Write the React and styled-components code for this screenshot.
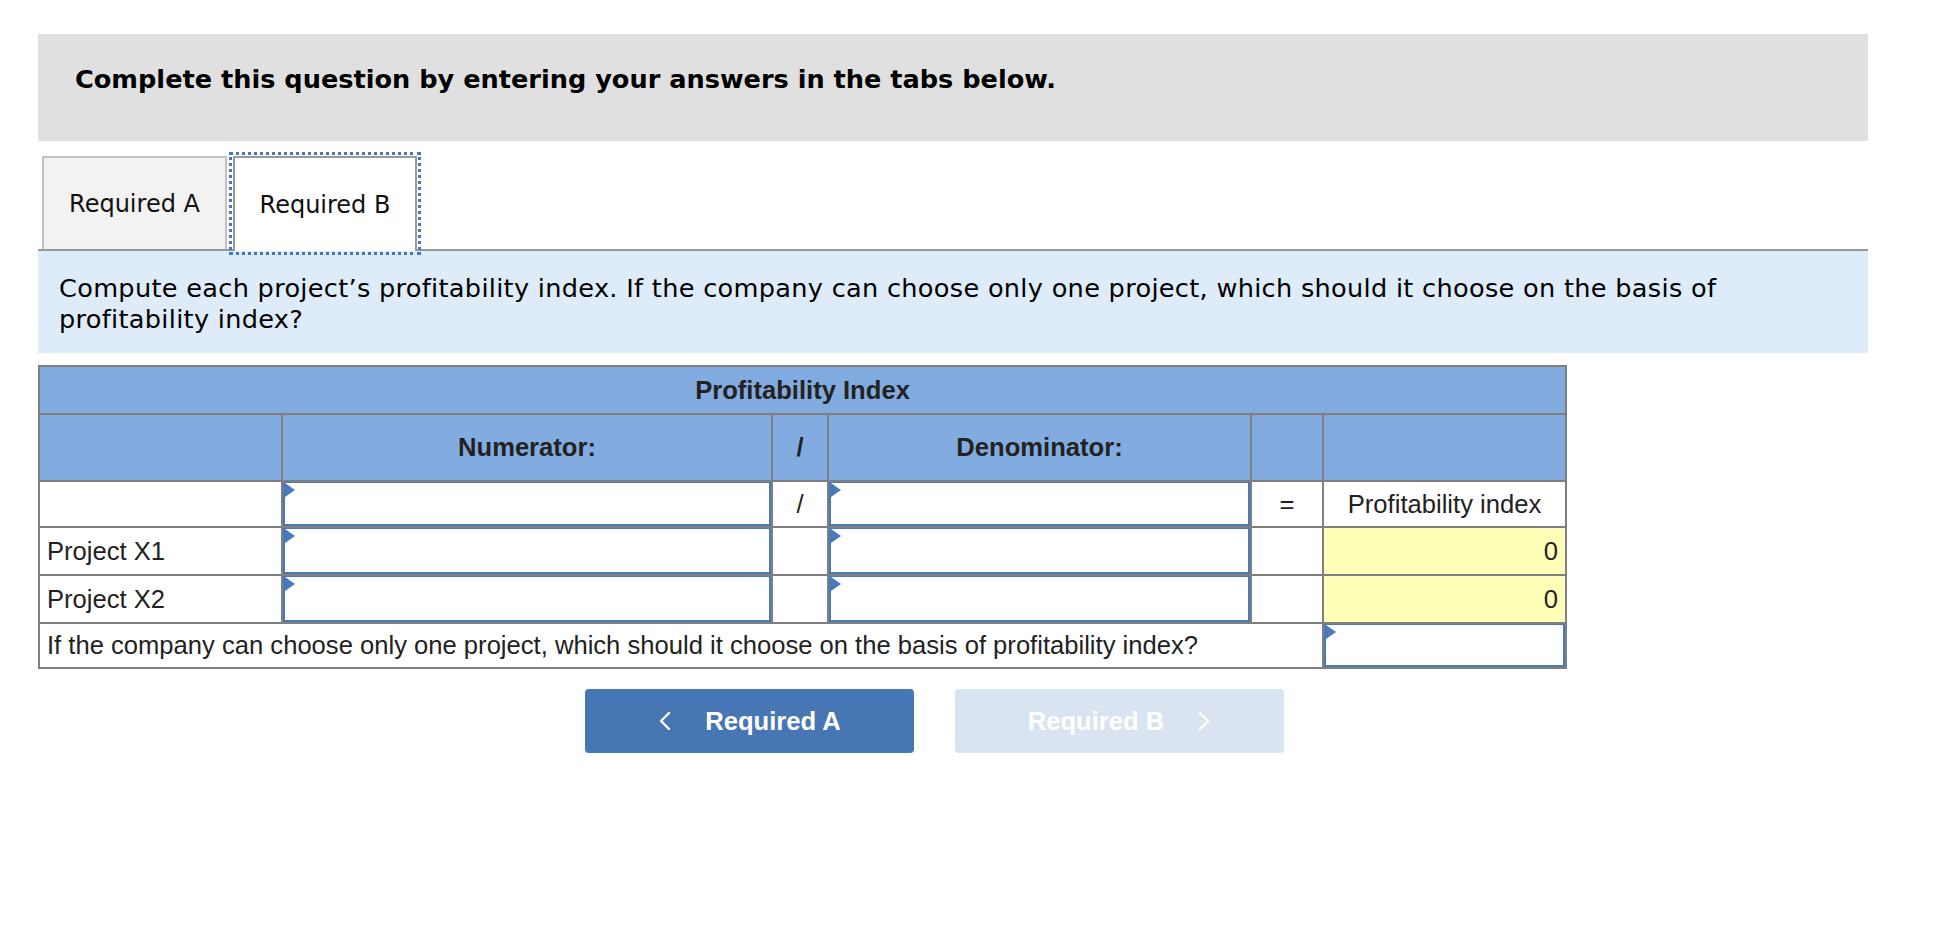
import styled, { createGlobalStyle } from "styled-components";

const GlobalStyle = createGlobalStyle`
  html, body {
    margin: 0;
    padding: 0;
    background: #fff;
  }
  * {
    box-sizing: border-box;
  }
`

const Page = styled.main`
  width: 1830px;
  margin: 34px 0 0 38px;
`

const Banner = styled.div`
  height: 107px;
  padding: 31px 37px;
  background: #e0e0e0;
  font-family: "DejaVu Sans", Verdana, sans-serif;
  font-weight: bold;
  font-size: 25.6px;
  line-height: 1.164;
  color: #000;
`

const TabBar = styled.div`
  display: flex;
  align-items: flex-end;
  gap: 6px;
  margin-top: 15px;
  padding-left: 4px;
  border-bottom: 2px solid #999;
`

const Tab = styled.button`
  width: ${(p) => (p.$active ? "184px" : "185px")};
  height: ${(p) => (p.$active ? "95px" : "93px")};
  margin-bottom: ${(p) => (p.$active ? "-2px" : "0")};
  padding: 0;
  position: relative;
  background: ${(p) => (p.$active ? "#fff" : "#f2f2f2")};
  border: 2px solid ${(p) => (p.$active ? "#9a9a9a" : "#c2c2c2")};
  border-bottom: ${(p) => (p.$active ? "none" : "0")};
  outline: ${(p) => (p.$active ? "3px dotted #4378c0" : "none")};
  outline-offset: 1px;
  font-family: "DejaVu Sans", Verdana, sans-serif;
  font-size: 24px;
  color: #111;
  cursor: pointer;
`

const Prompt = styled.div`
  padding: 22px 21px 18px;
  background: #deebf8;
  font-family: "DejaVu Sans", Verdana, sans-serif;
  font-size: 25.6px;
  letter-spacing: 0.3px;
  line-height: 31px;
  color: #000;
`

const Grid = styled.div`
  display: grid;
  grid-template-columns: 241px 488px 54px 421px 70px 241px;
  grid-template-rows: 46px 65px 44px 46px 46px 43px;
  gap: 2px;
  padding: 2px;
  width: max-content;
  margin-top: 12px;
  background: #7f7f7f;
  font-family: "Liberation Sans", Arial, sans-serif;
  font-size: 25.6px;
  color: #222;
`

const Cell = styled.div`
  display: flex;
  align-items: center;
  justify-content: ${(p) =>
    p.$align === "left" ? "flex-start" : p.$align === "right" ? "flex-end" : "center"};
  padding: 0 7px;
  background: ${(p) => (p.$head ? "#82acdf" : p.$fill ? "#ffffb8" : "#fff")};
  font-weight: ${(p) => (p.$head ? "bold" : "normal")};
  white-space: nowrap;
`

const TitleCell = styled(Cell)`
  grid-column: 1 / -1;
`

const QuestionCell = styled(Cell)`
  grid-column: 1 / 6;
`

const InputCell = styled.div`
  position: relative;
  background: #fff;

  &::after {
    content: "";
    position: absolute;
    top: 1px;
    left: 2px;
    border-left: 10px solid #4a78b8;
    border-top: 7px solid transparent;
    border-bottom: 7px solid transparent;
  }
`

const Entry = styled.input`
  display: block;
  width: 100%;
  height: 100%;
  margin: 0;
  padding: 0 8px;
  border: 2px solid #4a78b8;
  border-top-width: 1px;
  background: #fff;
  font-family: "Liberation Sans", Arial, sans-serif;
  font-size: 25.6px;
  outline: none;
`

const NavRow = styled.div`
  display: flex;
  gap: 41px;
  margin-top: 20px;
  padding-left: 547px;
`

const NavButton = styled.button`
  width: 329px;
  height: 64px;
  display: flex;
  align-items: center;
  justify-content: center;
  gap: 33px;
  padding: 0;
  border: none;
  border-radius: 4px;
  background: ${(p) => (p.disabled ? "#d9e4f0" : "#4776b4")};
  color: #fff;
  font-family: "Liberation Sans", Arial, sans-serif;
  font-weight: bold;
  font-size: 25.6px;
  cursor: ${(p) => (p.disabled ? "default" : "pointer")};
`

function Chevron({ dir }) {
  const points = dir === "left" ? "11,2 3,10 11,18" : "3,2 11,10 3,18";
  return (
    <svg width="14" height="20" viewBox="0 0 14 20">
      <polyline
        points={points}
        fill="none"
        stroke="currentColor"
        strokeWidth="2.4"
        strokeLinecap="round"
        strokeLinejoin="round"
      />
    </svg>
  );
}

const rows = ["Project X1", "Project X2"];

function App() {
  return (
    <Page>
      <GlobalStyle />
      <Banner>Complete this question by entering your answers in the tabs below.</Banner>

      <TabBar>
        <Tab type="button">Required A</Tab>
        <Tab type="button" $active>Required B</Tab>
      </TabBar>

      <Prompt>
        Compute each project’s profitability index. If the company can choose only one project, which should it choose on the basis of profitability index?
      </Prompt>

      <Grid>
        <TitleCell $head>Profitability Index</TitleCell>

        <Cell $head />
        <Cell $head>Numerator:</Cell>
        <Cell $head>/</Cell>
        <Cell $head>Denominator:</Cell>
        <Cell $head />
        <Cell $head />

        <Cell />
        <InputCell><Entry /></InputCell>
        <Cell>/</Cell>
        <InputCell><Entry /></InputCell>
        <Cell>=</Cell>
        <Cell>Profitability index</Cell>

        {rows.map((name) => (
          <>
            <Cell key={name} $align="left">{name}</Cell>
            <InputCell><Entry /></InputCell>
            <Cell />
            <InputCell><Entry /></InputCell>
            <Cell />
            <Cell $fill $align="right">0</Cell>
          </>
        ))}

        <QuestionCell $align="left">
          If the company can choose only one project, which should it choose on the basis of profitability index?
        </QuestionCell>
        <InputCell><Entry /></InputCell>
      </Grid>

      <NavRow>
        <NavButton type="button">
          <Chevron dir="left" />
          Required A
        </NavButton>
        <NavButton type="button" disabled>
          Required B
          <Chevron dir="right" />
        </NavButton>
      </NavRow>
    </Page>
  );
}

export default App
